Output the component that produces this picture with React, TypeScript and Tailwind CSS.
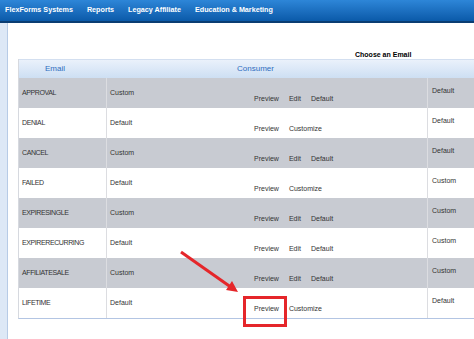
const rows = [
  { name: "APPROVAL", mid: "Custom", actions: ["Preview", "Edit", "Default"], last: "Default" },
  { name: "DENIAL", mid: "Default", actions: ["Preview", "Customize"], last: "Default" },
  { name: "CANCEL", mid: "Custom", actions: ["Preview", "Edit", "Default"], last: "Default" },
  { name: "FAILED", mid: "Default", actions: ["Preview", "Customize"], last: "Custom" },
  { name: "EXPIRESINGLE", mid: "Custom", actions: ["Preview", "Edit", "Default"], last: "Custom" },
  { name: "EXPIRERECURRING", mid: "Default", actions: ["Preview", "Edit", "Default"], last: "Custom" },
  { name: "AFFILIATESALE", mid: "Custom", actions: ["Preview", "Edit", "Default"], last: "Custom" },
  { name: "LIFETIME", mid: "Default", actions: ["Preview", "Customize"], last: "Default" },
];

const navItems = ["FlexForms Systems", "Reports", "Legacy Affiliate", "Education & Marketing"];

export default function App() {
  return (
    <div className="relative w-[474px] h-[339px] overflow-hidden bg-white font-['Liberation_Sans',Arial,sans-serif] text-[#333]">
      {/* top nav */}
      <nav className="h-[23px] flex items-center gap-[14px] pl-[5px] bg-gradient-to-b from-[#2d86d8] to-[#0a5aa9] border-b-2 border-[#0a3d72] text-white text-[7.2px] font-bold">
        {navItems.map((item) => (
          <span key={item}>{item}</span>
        ))}
      </nav>

      <div className="flex h-[316px]">
        <div className="w-[8px] shrink-0 bg-[#dde8f6] border-r border-[#b7cbe6]" />

        <div className="flex-1 min-w-0 pl-[10px] pt-[28px]">
          <p className="pl-[337px] text-[7px] leading-[8px] font-bold text-black">Choose an Email</p>

          <div className="w-[460px] border-l border-[#d6d9df] border-b border-b-[#b3c5e3]">
            <div className="h-[19px] flex items-center border-t border-[#d3dff0] bg-gradient-to-b from-[#eaf1fb] to-[#cddff3] text-[8px] text-[#2f6dc0]">
              <span className="pl-[26px] w-[218px]">Email</span>
              <span>Consumer</span>
            </div>

            {rows.map((r, i) => (
              <div
                key={r.name}
                className={`h-[30px] flex text-[7px] leading-[8px] ${i % 2 === 0 ? "bg-[#c8cbd2]" : "bg-white"}`}
              >
                <div className="w-[87px] pl-[3px] flex items-center tracking-[-0.4px]">{r.name}</div>
                <div className="w-[321px] border-l border-[#dcdde1] pl-[3px] flex">
                  <span className="w-[144px] self-center">{r.mid}</span>
                  <div className="self-end pb-[5px] flex gap-[10px]">
                    {r.actions.map((a) => (
                      <span key={a}>{a}</span>
                    ))}
                  </div>
                </div>
                <div className="flex-1 border-l border-[#dcdde1] pl-[4px] pb-[4px] flex items-center">{r.last}</div>
              </div>
            ))}
          </div>
        </div>
      </div>

      {/* callout */}
      <div className="absolute left-[243px] top-[296px] w-[44px] h-[31px] border-[3px] border-[#e5262a]" />
      <svg className="absolute left-0 top-0" width="474" height="339" viewBox="0 0 474 339">
        <line x1="181" y1="252" x2="230" y2="286.5" stroke="#e5262a" strokeWidth="3" />
        <polygon points="238,292 226,290 232,281" fill="#e5262a" />
      </svg>
    </div>
  );
}
